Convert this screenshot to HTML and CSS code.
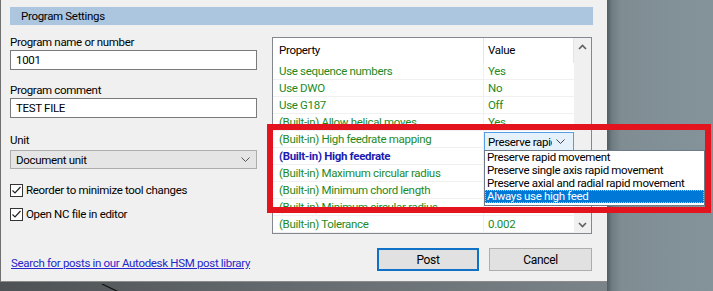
FILE: index.html
```html
<!DOCTYPE html>
<html lang="en">
<head>
  <meta charset="UTF-8" />
  <title>Post Process - Program Settings</title>
  <link rel="stylesheet" href="styles.css">
</head>
<body>
  <div class="screen">
    <div class="dialog">
      <div class="section-title">Program Settings</div>

      <div class="content">
        <div class="fields">
          <div class="field-label">Program name or number</div>
          <div class="textbox">1001</div>
          <div class="field-label gap">Program comment</div>
          <div class="textbox">TEST FILE</div>
          <div class="field-label gap-unit">Unit</div>
          <div class="select">
            <span>Document unit</span>
            <svg width="9" height="5" viewBox="0 0 9 5"><path d="M0.5 0.5 L4.5 4.5 L8.5 0.5" fill="none" stroke="#555" stroke-width="1"/></svg>
          </div>
          <div class="check first">
            <span class="box"><svg width="11" height="11" viewBox="0 0 11 11"><path d="M1.5 5.5 L4 8 L9.5 2" fill="none" stroke="#222" stroke-width="1.2"/></svg></span>
            Reorder to minimize tool changes
          </div>
          <div class="check">
            <span class="box"><svg width="11" height="11" viewBox="0 0 11 11"><path d="M1.5 5.5 L4 8 L9.5 2" fill="none" stroke="#222" stroke-width="1.2"/></svg></span>
            Open NC file in editor
          </div>
        </div>

        <div class="grid-wrap">
          <div class="props">
            <div class="row head"><div class="cell">Property</div><div class="cell">Value</div></div>
            <div class="row"><div class="cell">Use sequence numbers</div><div class="cell">Yes</div></div>
            <div class="row"><div class="cell">Use DWO</div><div class="cell">No</div></div>
            <div class="row"><div class="cell">Use G187</div><div class="cell">Off</div></div>
            <div class="row"><div class="cell">(Built-in) Allow helical moves</div><div class="cell">Yes</div></div>
            <div class="row"><div class="cell">(Built-in) High feedrate mapping</div><div class="cell"></div></div>
            <div class="row"><div class="cell bold">(Built-in) High feedrate</div><div class="cell"></div></div>
            <div class="row"><div class="cell">(Built-in) Maximum circular radius</div><div class="cell"></div></div>
            <div class="row"><div class="cell">(Built-in) Minimum chord length</div><div class="cell"></div></div>
            <div class="row"><div class="cell">(Built-in) Minimum circular radius</div><div class="cell"></div></div>
            <div class="row"><div class="cell">(Built-in) Tolerance</div><div class="cell">0.002</div></div>
          </div>
          <div class="scrollbar">
            <div class="arrow"><svg width="9" height="6" viewBox="0 0 9 6"><path d="M1 5 L4.5 1.5 L8 5" fill="none" stroke="#606060" stroke-width="1.6"/></svg></div>
            <div class="arrow"><svg width="9" height="6" viewBox="0 0 9 6"><path d="M1 1 L4.5 4.5 L8 1" fill="none" stroke="#606060" stroke-width="1.6"/></svg></div>
          </div>
        </div>
      </div>

      <div class="footer">
        <a class="post-link" href="#">Search for posts in our Autodesk HSM post library</a>
        <div class="buttons">
          <button class="btn primary">Post</button>
          <button class="btn">Cancel</button>
        </div>
      </div>
    </div>

    <div class="desktop-side"></div>
    <div class="desktop-bottom">
      <svg width="607" height="9" viewBox="0 0 607 9"><path d="M102 0 L121 9" stroke="#111" stroke-width="1.2"/></svg>
    </div>

    <!-- open combo box over the grid -->
    <div class="combo">
      <span>Preserve rapid movement</span>
      <svg width="9" height="5" viewBox="0 0 9 5"><path d="M0.5 0.5 L4.5 4.5 L8.5 0.5" fill="none" stroke="#444" stroke-width="1"/></svg>
    </div>
    <ul class="dropdown">
      <li>Preserve rapid movement</li>
      <li>Preserve single axis rapid movement</li>
      <li>Preserve axial and radial rapid movement</li>
      <li class="selected">Always use high feed</li>
    </ul>

    <div class="highlight"></div>
  </div>
</body>
</html>
```

FILE: styles.css
```css
* {
  box-sizing: border-box;
  margin: 0;
  padding: 0;
}

body {
  font-family: Roboto, "Noto Sans", sans-serif;
  font-size: 11.5px;
  letter-spacing: -0.32px;
  color: #000;
  background: #7a868c;
}

.screen {
  position: relative;
  width: 713px;
  height: 291px;
  overflow: hidden;
  display: grid;
  grid-template-columns: 607px 1fr;
  grid-template-rows: 282px 1fr;
}

/* Dialog */
.dialog {
  background: #f0f0f0;
  border-left: 1px solid #6f6f6f;
  border-bottom: 1px solid #8a8a8a;
  padding: 7px 15px 0 9px;
}

.section-title {
  height: 18px;
  line-height: 18px;
  background: #adc6e0;
  padding-left: 11px;
  margin-right: -1px;
}

.content {
  display: grid;
  grid-template-columns: 247px 320px;
  column-gap: 15px;
}

/* Left column */
.fields {
  display: flex;
  flex-direction: column;
  padding-top: 9px;
}

.field-label {
  height: 16px;
  line-height: 16px;
}

.field-label.gap {
  margin-top: 12px;
}

.field-label.gap-unit {
  margin-top: 14px;
}

.textbox {
  height: 20px;
  line-height: 18px;
  background: #fff;
  border: 1px solid #7a7a7a;
  padding-left: 5px;
}

.select {
  margin-top: 2px;
  height: 19px;
  background: #e5e5e5;
  border: 1px solid #adadad;
  display: flex;
  align-items: center;
  justify-content: space-between;
  padding: 0 6px 0 5px;
}

.check {
  display: flex;
  align-items: center;
  gap: 3px;
  height: 16px;
  margin-top: 8px;
}

.check.first {
  margin-top: 13px;
}

.check .box {
  width: 13px;
  height: 13px;
  border: 1px solid #333;
  background: #fff;
  display: flex;
  align-items: center;
  justify-content: center;
}

/* Property grid */
.grid-wrap {
  margin-top: 12px;
  height: 197px;
  border: 1px solid #828790;
  background: #fff;
  display: flex;
}

.props {
  width: 301px;
}

.row {
  display: grid;
  grid-template-columns: 211px 90px;
  height: 17px;
  border-bottom: 1px solid #f0f0f0;
  color: #1e8a1e;
}

.row .cell {
  line-height: 16px;
  padding-left: 6px;
  white-space: nowrap;
  overflow: hidden;
}

.row .cell:first-child {
  border-right: 1px solid #f0f0f0;
}

.row .cell:last-child {
  padding-left: 4px;
}

.row .bold {
  color: #1c1cb0;
  font-weight: bold;
}

.row.head {
  height: 25px;
  color: #000;
  border-bottom: none;
}

.row.head .cell {
  line-height: 25px;
  border-right: 1px solid #e5e5e5;
}

.scrollbar {
  width: 17px;
  background: #f0f0f0;
  display: flex;
  flex-direction: column;
  justify-content: space-between;
}

.arrow {
  height: 17px;
  display: flex;
  align-items: center;
  justify-content: center;
}

/* Footer */
.footer {
  display: flex;
  justify-content: space-between;
  align-items: flex-start;
  margin-top: 14px;
}

.post-link {
  color: #2727c9;
  margin-top: 7px;
  line-height: 16px;
  margin-left: 1px;
}

.buttons {
  display: flex;
  gap: 10px;
}

.btn {
  font-family: inherit;
  font-size: 12px;
  letter-spacing: inherit;
  width: 103px;
  height: 23px;
  background: #e1e1e1;
  border: 1px solid #adadad;
}

.btn.primary {
  width: 102px;
  border: 2px solid #0f72c6;
}

/* Desktop around the dialog */
.desktop-side {
  grid-row: 1 / 3;
  grid-column: 2;
  background: linear-gradient(to right, #4f5c62 0, #6f7d83 5px, #7f8d93 14px, #84939a 100%);
}

.desktop-bottom {
  background: linear-gradient(to right, #4e5255 0, #6a7074 60%, #7a8489 100%);
}

/* Open combo + its list */
.combo {
  position: absolute;
  left: 484px;
  top: 132px;
  width: 90px;
  height: 19px;
  background: #e5f1fb;
  border: 1px solid #569de5;
  display: flex;
  align-items: center;
  justify-content: space-between;
  padding: 0 8px 0 3px;
}

.combo span {
  width: 64px;
  overflow: hidden;
  white-space: nowrap;
}

.dropdown {
  position: absolute;
  left: 484px;
  top: 150px;
  width: 221px;
  height: 56px;
  list-style: none;
  background: #fff;
  border: 1px solid #6d7a8a;
}

.dropdown li {
  height: 13px;
  line-height: 13px;
  padding-left: 2px;
  white-space: nowrap;
}

.dropdown li.selected {
  background: #0078d7;
  color: #fff;
  outline: 1px dotted #9cc8ee;
  outline-offset: -1px;
}

/* Red annotation box */
.highlight {
  position: absolute;
  left: 267px;
  top: 124px;
  width: 444px;
  height: 89px;
  border: 6px solid #e3141d;
}
```
